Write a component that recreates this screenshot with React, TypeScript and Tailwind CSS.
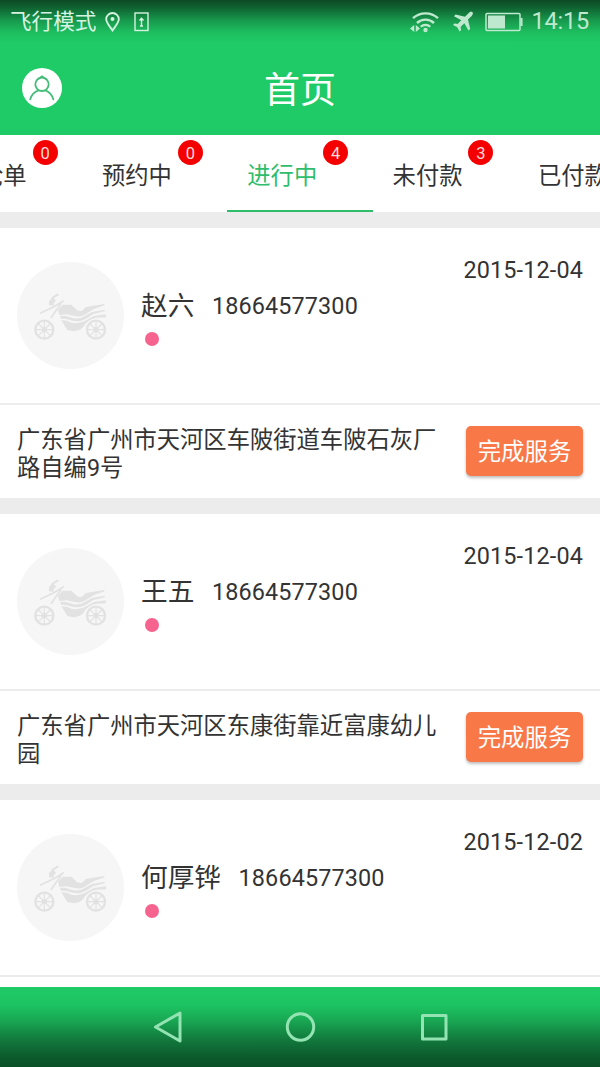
const tabs = [
  { label: '待抢单', count: 0 },
  { label: '预约中', count: 0 },
  { label: '进行中', count: 4, active: true },
  { label: '未付款', count: 3 },
  { label: '已付款' },
];

const orders = [
  { name: '赵六', phone: '18664577300', date: '2015-12-04', address: '广东省广州市天河区车陂街道车陂石灰厂路自编9号' },
  { name: '王五', phone: '18664577300', date: '2015-12-04', address: '广东省广州市天河区东康街靠近富康幼儿园' },
  { name: '何厚铧', phone: '18664577300', date: '2015-12-02', address: '' },
];

const StatusBar = () => {
  return (
    <div className="flex h-[43px] items-center justify-between pl-[10px] pr-[11px] text-[#d6f3e1]">
      <div className="flex items-center">
        <span className="pt-[1px] text-[21.6px] leading-none">飞行模式</span>
        <svg className="ml-[9px]" width="15" height="20" viewBox="0 0 15 20" fill="none" stroke="currentColor">
          <path d="M7.500 18.500C4.500 14 1.200 10.500 1.200 7.200a6.300 6.200 0 0 1 12.600 0c0 3.300-3.300 6.800-6.300 11.300z" strokeWidth="1.800" />
          <circle cx="7.500" cy="7" r="2" fill="currentColor" stroke="none" />
        </svg>
        <svg className="ml-[14px]" width="16" height="20" viewBox="0 0 16 20" fill="none" stroke="currentColor">
          <rect x="1" y="1" width="13" height="17.500" strokeWidth="1.400" />
          <path d="M7.500 14V7M5.500 8.500l2-2.300 2 2.300M6 14h3" strokeWidth="1.400" />
        </svg>
      </div>
      <div className="flex items-center text-[#bfe9cf]">
        <svg width="32" height="22" viewBox="0 0 32 22" fill="none" stroke="currentColor">
          <path d="M5 7.200a18.500 18.500 0 0 1 25 0M9 12a12.500 12.500 0 0 1 17 0" strokeWidth="2.400" />
          <path d="M12.700 15.800a7 7 0 0 1 9.600 0" strokeWidth="2.200" />
          <circle cx="17.500" cy="19" r="2.200" fill="currentColor" stroke="none" />
          <path d="M6.200 14v7l-4.200-3.500zM7.800 14v7l4.200-3.500z" fill="currentColor" stroke="none" />
        </svg>
        <svg className="ml-[12px]" width="22" height="22" viewBox="0 0 22 22" fill="currentColor">
          <path d="M20.500 1.300c.9.900.2 2.600-.8 3.600L16 8.600l2.200 9.500-1.700 1.500-4.200-7.300-3.700 3.700.5 3.200-1.500 1.400-2.300-4.300L1 14l1.400-1.400 3.200.5 3.700-3.800L2 5.200l1.600-1.600 9.400 2.100 3.800-3.700c1-1 2.800-1.600 3.700-.7z" />
        </svg>
        <svg className="ml-[11px]" width="38" height="20" viewBox="0 0 38 20">
          <rect x="1" y="1.500" width="34" height="17" rx="1" fill="none" stroke="currentColor" strokeWidth="1.500" />
          <rect x="3" y="3.500" width="17" height="13" fill="currentColor" />
          <path d="M35.500 6h2v8h-2z" fill="currentColor" />
        </svg>
        <span className="ml-[8px] pt-[1px] text-[23.5px] leading-none tracking-[-0.200px]">14:15</span>
      </div>
    </div>
  );
};

const Header = () => {
  return (
    <header className="h-[135px] shrink-0 bg-[#1fcb66] bg-[linear-gradient(to_bottom,#0d4a24_0px,#0f6030_7px,#17974b_20px,#1dbd5f_32px,#1fcb66_43px)]">
      <StatusBar />
      <div className="grid h-[92px] grid-cols-3 items-center px-[22px] pb-[2px]">
        <div className="flex size-[40px] items-center justify-center rounded-full bg-white">
          <svg width="40" height="40" viewBox="0 0 40 40" fill="none" stroke="#45bd79" strokeWidth="1.800" strokeLinecap="round">
            <circle cx="20" cy="16.300" r="6.700" />
            <path d="M15.500 11.300L20 8.300l4.500 3" strokeWidth="1.600" />
            <path d="M8.200 31.300c1.500-5 4.600-7.600 8.300-8.900M31.300 31.300c-1.500-5-4.300-7.600-8-8.900" />
          </svg>
        </div>
        <h1 className="pt-[6px] text-center text-[36px] leading-none text-white">首页</h1>
      </div>
    </header>
  );
};

const Tabs = () => {
  return (
    <nav className="flex h-[77px] shrink-0 overflow-hidden bg-white">
      {tabs.map(({ label, count, active }) => (
        <div
          key={label}
          className={`flex w-[145.3px] shrink-0 items-start border-b-2 pl-[20px] first:-ml-[63.3px] ${
            active ? 'border-[#2fbd6c] text-[#2fbd6c]' : 'border-transparent text-[#333]'
          }`}
        >
          <span className="mt-[29px] text-[23.3px] leading-[24px]">{label}</span>
          {count !== undefined && (
            <span className="ml-[6px] mt-[5px] flex size-[25px] items-center justify-center rounded-full bg-[#f40000] pt-[3px] text-[16.500px] leading-none text-[#ffdcdc]">
              {count}
            </span>
          )}
        </div>
      ))}
    </nav>
  );
};

const MotorcycleAvatar = () => {
  return (
    <svg className="mt-[34px] size-[107px] shrink-0" viewBox="51 37 321 321">
      <circle cx="211.500" cy="197.500" r="160.500" fill="#f6f6f6" />
      <g fill="none" stroke="#e2e2e2" strokeLinecap="round">
        <circle cx="133" cy="240" r="27" strokeWidth="7" />
        <circle cx="288" cy="240" r="27" strokeWidth="7" />
        <g strokeWidth="3.500">
          <path d="M133 216v48M109 240h48M116 223l34 34M150 223l-34 34" />
          <path d="M288 216v48M264 240h48M271 223l34 34M305 223l-34 34" />
        </g>
        <path d="M190 154l-30 18-38 18M182 163l-28 40" strokeWidth="5" />
        <path d="M173 135l-15 9-8 18" strokeWidth="6" />
      </g>
      <g fill="#e2e2e2">
        <circle cx="133" cy="240" r="8" />
        <circle cx="288" cy="240" r="8" />
        <path d="M147 153l14-9 7 9-8 9 2 7-15-3z" />
        <path d="M174 180l14-15h26l14 14q8 8 18 4l12-11 54-9 2 4-32 11-20 12q-14 12-32 10-20-3-30-6l-22 2z" />
        <path d="M180 199q18-3 30 4 25 9 44-4l22-12 38-7v5l-34 8-22 14q-22 13-46 5-16-7-28-4z" />
        <path d="M184 212q16-1 30 7 26 5 46-8l22-12 36-5v9l-28 1q-28 4-40 28l-10 8-18 5-20-4z" />
      </g>
    </svg>
  );
};

const OrderCard = ({ name, phone, date, address }: (typeof orders)[number]) => {
  return (
    <article className="shrink-0 bg-white text-[23.4px] text-[#333]">
      <div className="flex h-[177px] border-b-2 border-[#ececec] px-[17px]">
        <MotorcycleAvatar />
        <div className="ml-[17px] mt-[62px] flex-1">
          <div className="flex items-center leading-[30px]">
            <span className="pt-[1px] text-[26.7px]">{name}</span>
            <span className="ml-[17.500px] tracking-[0.130px]">{phone}</span>
          </div>
          <div className="ml-[4px] mt-[11px] size-[14px] rounded-full bg-[#f5638e]" />
        </div>
        <time className="-ml-[130px] mt-[28px] leading-[28px] tracking-[0.150px]">{date}</time>
      </div>
      {address ? (
        <div className="flex h-[93px] items-start justify-between px-[17px] pt-[21px]">
          <p className="w-[422px] pt-[1px] text-[23.300px] leading-[27.500px]">{address}</p>
          <button className="h-[50px] w-[117px] rounded-[5px] bg-[#f87848] pt-[4px] text-white shadow-[0_2px_3px_rgba(0,0,0,0.25)]">
            完成服务
          </button>
        </div>
      ) : (
        <div className="h-[93px]" />
      )}
    </article>
  );
};

const NavigationBar = () => {
  return (
    <footer className="grid h-[80px] shrink-0 grid-cols-[133px_133px_133px] items-center justify-center bg-[linear-gradient(to_bottom,#1fcb66_0%,#1dc462_22%,#19a753_42%,#127a3d_65%,#0c5a2c_88%,#0b5027_100%)]">
      <svg className="justify-self-center" width="32" height="34" viewBox="0 0 32 34" fill="none" stroke="#93e3b3" strokeWidth="3" strokeLinejoin="round">
        <path d="M29 3v28L4.500 17z" />
      </svg>
      <svg className="justify-self-center" width="32" height="32" viewBox="0 0 32 32" fill="none" stroke="#93e3b3" strokeWidth="3">
        <circle cx="16.500" cy="16" r="13.200" />
      </svg>
      <svg className="justify-self-center" width="32" height="32" viewBox="0 0 32 32" fill="none" stroke="#93e3b3" strokeWidth="3" strokeLinejoin="round">
        <path d="M5.500 4.500h23.500v23.500h-23.500z" />
      </svg>
    </footer>
  );
};

const App = () => {
  return (
    <div className="flex h-screen flex-col overflow-hidden bg-[#ececec] font-['Roboto','Noto_Sans_CJK_SC',sans-serif]">
      <Header />
      <Tabs />
      <main className="flex min-h-0 flex-1 flex-col gap-[16px] overflow-hidden pt-[16px]">
        {orders.map((order) => (
          <OrderCard key={order.name} {...order} />
        ))}
      </main>
      <NavigationBar />
    </div>
  );
};

export default App;
